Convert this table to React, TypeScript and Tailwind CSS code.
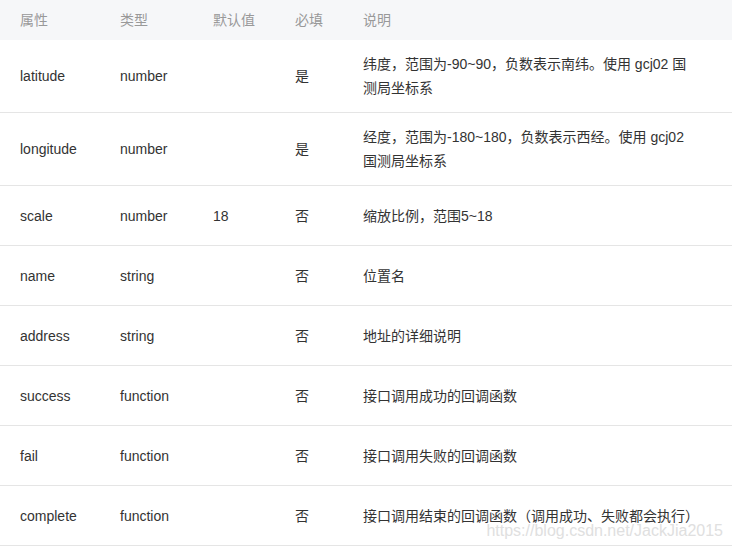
const rows: { name: string; type: string; def: string; req: string; desc: string }[] = [
  { name: "latitude", type: "number", def: "", req: "是", desc: "纬度，范围为-90~90，负数表示南纬。使用 gcj02 国测局坐标系" },
  { name: "longitude", type: "number", def: "", req: "是", desc: "经度，范围为-180~180，负数表示西经。使用 gcj02 国测局坐标系" },
  { name: "scale", type: "number", def: "18", req: "否", desc: "缩放比例，范围5~18" },
  { name: "name", type: "string", def: "", req: "否", desc: "位置名" },
  { name: "address", type: "string", def: "", req: "否", desc: "地址的详细说明" },
  { name: "success", type: "function", def: "", req: "否", desc: "接口调用成功的回调函数" },
  { name: "fail", type: "function", def: "", req: "否", desc: "接口调用失败的回调函数" },
  { name: "complete", type: "function", def: "", req: "否", desc: "接口调用结束的回调函数（调用成功、失败都会执行）" },
];

export default function App() {
  return (
    <div
      className="relative h-[550px] w-[732px] overflow-hidden bg-white text-[14px] text-[#333]"
      style={{ fontFamily: '"Liberation Sans", "Noto Sans CJK SC", sans-serif' }}
    >
      <div className="flex h-[40px] items-center bg-[#f6f7f9] text-[#999]">
        <div className="w-[100px] pl-5">属性</div>
        <div className="w-[93px] pl-5">类型</div>
        <div className="w-[82px] pl-5">默认值</div>
        <div className="w-[68px] pl-5">必填</div>
        <div className="flex-1 pl-5">说明</div>
      </div>
      {rows.map((r) => (
        <div key={r.name} className="flex min-h-[60px] items-center border-b border-[#e5e5e5] leading-6">
          <div className="w-[100px] shrink-0 py-3 pl-5">{r.name}</div>
          <div className="w-[93px] shrink-0 py-3 pl-5">{r.type}</div>
          <div className="w-[82px] shrink-0 py-3 pl-5">{r.def}</div>
          <div className="w-[68px] shrink-0 py-3 pl-5">{r.req}</div>
          <div className="w-[350px] shrink-0 py-3 pl-5">{r.desc}</div>
        </div>
      ))}
      <div
        className="absolute bottom-[7px] right-[9px] text-[16px] text-[#e0e0e0]"
        style={{ fontFamily: '"Liberation Sans", sans-serif' }}
      >
        https://blog.csdn.net/JackJia2015
      </div>
    </div>
  );
}
